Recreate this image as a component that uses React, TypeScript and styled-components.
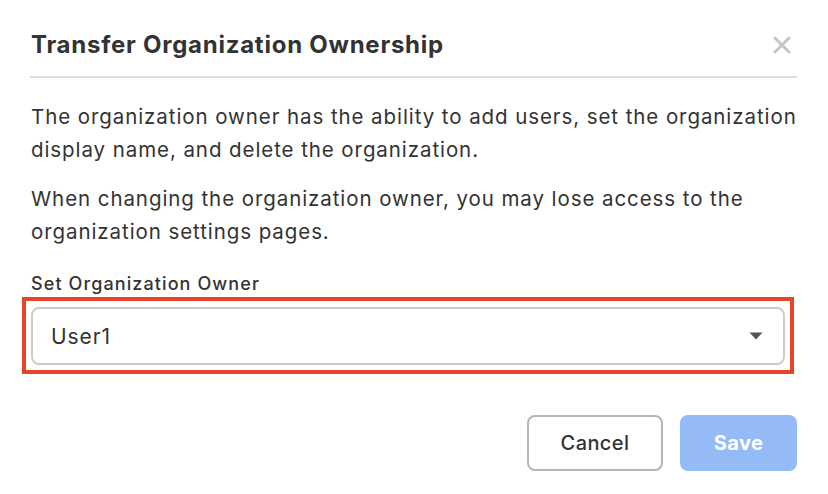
import React from "react";
import styled, { createGlobalStyle } from "styled-components";

const Global = createGlobalStyle`
  html, body { margin: 0; padding: 0; background: #ffffff; }
  body { font-family: Inter, "Noto Sans", "Liberation Sans", sans-serif; color: #333333; }
  * { box-sizing: border-box; }
`;

const Dialog = styled.div`
  width: 828px;
  height: 494px;
  padding: 0 31px;
  background: #fff;
  display: flex;
  flex-direction: column;
`;

const Header = styled.div`
  display: flex;
  align-items: center;
  justify-content: space-between;
  padding: 30px 0 16px 0;
  border-bottom: 2px solid #dddddd;
  margin-left: -1px;
`;

const Title = styled.h2`
  margin: 0 0 0 1px;
  font-size: 24px;
  line-height: 30px;
  font-weight: 700;
  color: #333333;
  letter-spacing: 0.75px;
`;

const CloseButton = styled.button`
  border: none;
  background: none;
  padding: 0;
  margin-right: 6px;
  width: 18px;
  height: 18px;
  display: flex;
  align-items: center;
  justify-content: center;
  cursor: pointer;
`;

const Body = styled.div`
  display: flex;
  flex-direction: column;
  padding-top: 22px;
`;

const Paragraph = styled.p`
  margin: 0 0 16px 0;
  font-size: 20.5px;
  line-height: 33px;
  font-weight: 400;
  letter-spacing: 0.92px;
  color: #333333;
`;

const Label = styled.label`
  display: block;
  margin: 8px 0 1px 0;
  font-size: 18px;
  line-height: 24px;
  font-weight: 500;
  letter-spacing: 1.1px;
  color: #333333;
`;

const Highlight = styled.div`
  margin: 0 3px 0 -9px;
  border: 4px solid #e8432b;
  padding: 6px 5px 5px 5px;
`;

const Select = styled.div`
  height: 58px;
  border: 2px solid #c9ccd1;
  border-radius: 8px;
  display: flex;
  align-items: center;
  justify-content: space-between;
  padding: 0 20px 0 18px;
  font-size: 21px;
  letter-spacing: 0.9px;
  color: #333333;
`;

const Footer = styled.div`
  display: flex;
  justify-content: flex-end;
  gap: 17px;
  margin-top: 41px;
`;

const Button = styled.button<{ $primary?: boolean }>`
  height: 56px;
  padding: 0;
  width: ${(p) => (p.$primary ? "117px" : "136px")};
  border-radius: 8px;
  font-family: Inter, "Noto Sans", "Liberation Sans", sans-serif;
  font-size: 20px;
  letter-spacing: 0.4px;
  font-weight: ${(p) => (p.$primary ? 700 : 500)};
  color: ${(p) => (p.$primary ? "#ffffff" : "#333333")};
  background: ${(p) => (p.$primary ? "#95bbf7" : "#ffffff")};
  border: ${(p) => (p.$primary ? "none" : "2px solid #b6b6b6")};
`;

export default function App() {
  return (
    <>
      <Global />
      <Dialog>
        <Header>
          <Title>Transfer Organization Ownership</Title>
          <CloseButton aria-label="Close">
            <svg width="18" height="18" viewBox="0 0 18 18">
              <path d="M2 2 L16 16 M16 2 L2 16" stroke="#c6c6c6" strokeWidth="3" strokeLinecap="round" />
            </svg>
          </CloseButton>
        </Header>
        <Body>
          <Paragraph>
            The organization owner has the ability to add users, set the organization display name, and delete the organization.
          </Paragraph>
          <Paragraph>
            When changing the organization owner, you may lose access to the organization settings pages.
          </Paragraph>
          <Label>Set Organization Owner</Label>
          <Highlight>
            <Select>
              <span>User1</span>
              <svg width="14" height="8" viewBox="0 0 14 8">
                <path d="M0.5 0.5 L13.5 0.5 L7 7.5 Z" fill="#555555" />
              </svg>
            </Select>
          </Highlight>
        </Body>
        <Footer>
          <Button>Cancel</Button>
          <Button $primary>Save</Button>
        </Footer>
      </Dialog>
    </>
  );
}
